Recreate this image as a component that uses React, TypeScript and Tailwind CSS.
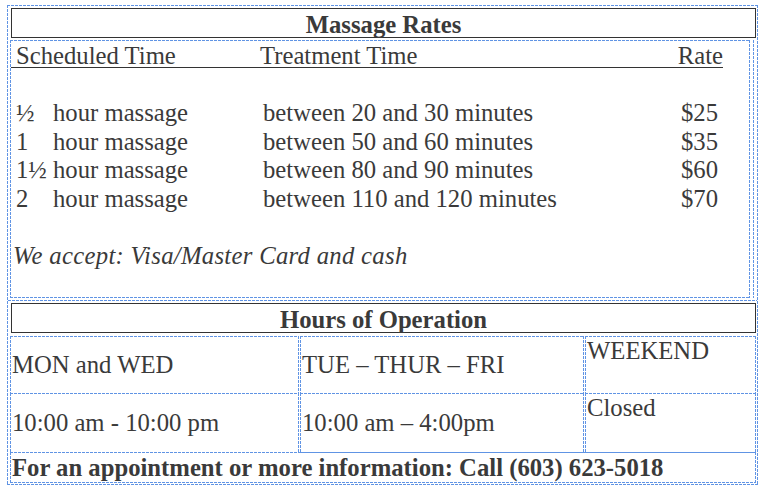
// dashed blue "table gridlines" drawn as gradients so the dash rhythm matches the Word look
const dash =
  "border border-transparent bg-origin-border bg-no-repeat [background-image:repeating-linear-gradient(90deg,#6094e4_0_3px,transparent_3px_4px),repeating-linear-gradient(90deg,#6094e4_0_3px,transparent_3px_4px),repeating-linear-gradient(180deg,#6094e4_0_3px,transparent_3px_4px),repeating-linear-gradient(180deg,#6094e4_0_3px,transparent_3px_4px)] [background-size:100%_1px,100%_1px,1px_100%,1px_100%] [background-position:0_0,0_100%,0_0,100%_0]"
const dashBottom =
  "border-b border-transparent bg-origin-border bg-no-repeat [background-image:repeating-linear-gradient(90deg,#6094e4_0_3px,transparent_3px_4px)] [background-size:100%_1px] [background-position:0_100%]"
const dashRight =
  "border-r border-transparent bg-origin-border bg-no-repeat [background-image:repeating-linear-gradient(180deg,#6094e4_0_3px,transparent_3px_4px)] [background-size:1px_100%] [background-position:100%_0]"

const rates = [
  { qty: "½", rate: "$25", span: "between 20 and 30 minutes" },
  { qty: "1", rate: "$35", span: "between 50 and 60 minutes" },
  { qty: "1½", rate: "$60", span: "between 80 and 90 minutes" },
  { qty: "2", rate: "$70", span: "between 110 and 120 minutes" },
]

function TitleBox({ children }: { children: string }) {
  return (
    <div className="ml-[3px] flex h-[30px] w-[745px] items-start justify-center border border-[#333] pt-[2px] font-bold">
      {children}
    </div>
  )
}

function RateRow({ qty, span, rate }: { qty: string; span: string; rate: string }) {
  return (
    <div className="flex h-[28.5px] items-start">
      <span className="w-[42px] pl-[5px]">{qty}</span>
      <span className="w-[210px]">hour massage</span>
      <span className="w-[418px]">{span}</span>
      <span>{rate}</span>
    </div>
  )
}

export default function App() {
  return (
    <div
      className="h-[491px] w-[764px] bg-white pl-[7px] pt-[5px] text-[24.7px] leading-[28.5px] text-[#3a3a3a]"
      style={{ fontFamily: '"Liberation Serif", "Times New Roman", serif' }}
    >
      <div className={`h-[480px] w-[751px] ${dash}`}>
        {/* massage rates */}
        <div className={`h-[295px] pt-[2px] ${dashBottom}`}>
          <TitleBox>Massage Rates</TitleBox>
          <div className="ml-[2px] mt-[2px] flex">
            <div className={`h-[258px] w-[740px] pt-px ${dash}`}>
              <div className="h-[28.5px]">
                <div className="flex h-[26px] w-[712px] border-b border-[#333]">
                  <span className="w-[249px] pl-[5px]">Scheduled Time</span>
                  <span className="flex-1">Treatment Time</span>
                  <span>Rate</span>
                </div>
              </div>
              <div className="h-[28.5px]" />
              {rates.map((r) => (
                <RateRow key={r.qty} {...r} />
              ))}
              <div className="h-[28.5px]" />
              <div className="pl-[2px] italic tracking-[0.3px]">We accept: Visa/Master Card and cash</div>
            </div>
            <div className={`h-[258px] w-[4px] ${dashRight}`} />
          </div>
        </div>

        {/* hours */}
        <div className="pt-[2px]">
          <TitleBox>Hours of Operation</TitleBox>
          <div className="ml-[2px] mt-[3px] flex gap-[1px]">
            <div className={`flex h-[58px] w-[289px] items-center pl-[1px] ${dash}`}>MON and WED</div>
            <div className={`flex h-[58px] w-[284px] items-center pl-[1px] ${dash}`}>TUE – THUR – FRI</div>
            <div className={`h-[58px] w-[171px] pl-[1px] ${dash}`}>WEEKEND</div>
          </div>
          <div className="-mt-px ml-[2px] flex gap-[1px]">
            <div className={`flex h-[60px] w-[289px] items-center pl-[1px] ${dash}`}>10:00 am - 10:00 pm</div>
            <div className={`flex h-[60px] w-[284px] items-center pl-[1px] ${dash}`}>10:00 am – 4:00pm</div>
            <div className={`h-[60px] w-[171px] pl-[1px] ${dash}`}>Closed</div>
          </div>
          <div className={`-mt-px ml-[2px] h-[31px] w-[746px] pl-[1px] pt-[1px] font-bold ${dash}`}>
            For an appointment or more information: Call (603) 623-5018
          </div>
        </div>
      </div>
    </div>
  )
}
